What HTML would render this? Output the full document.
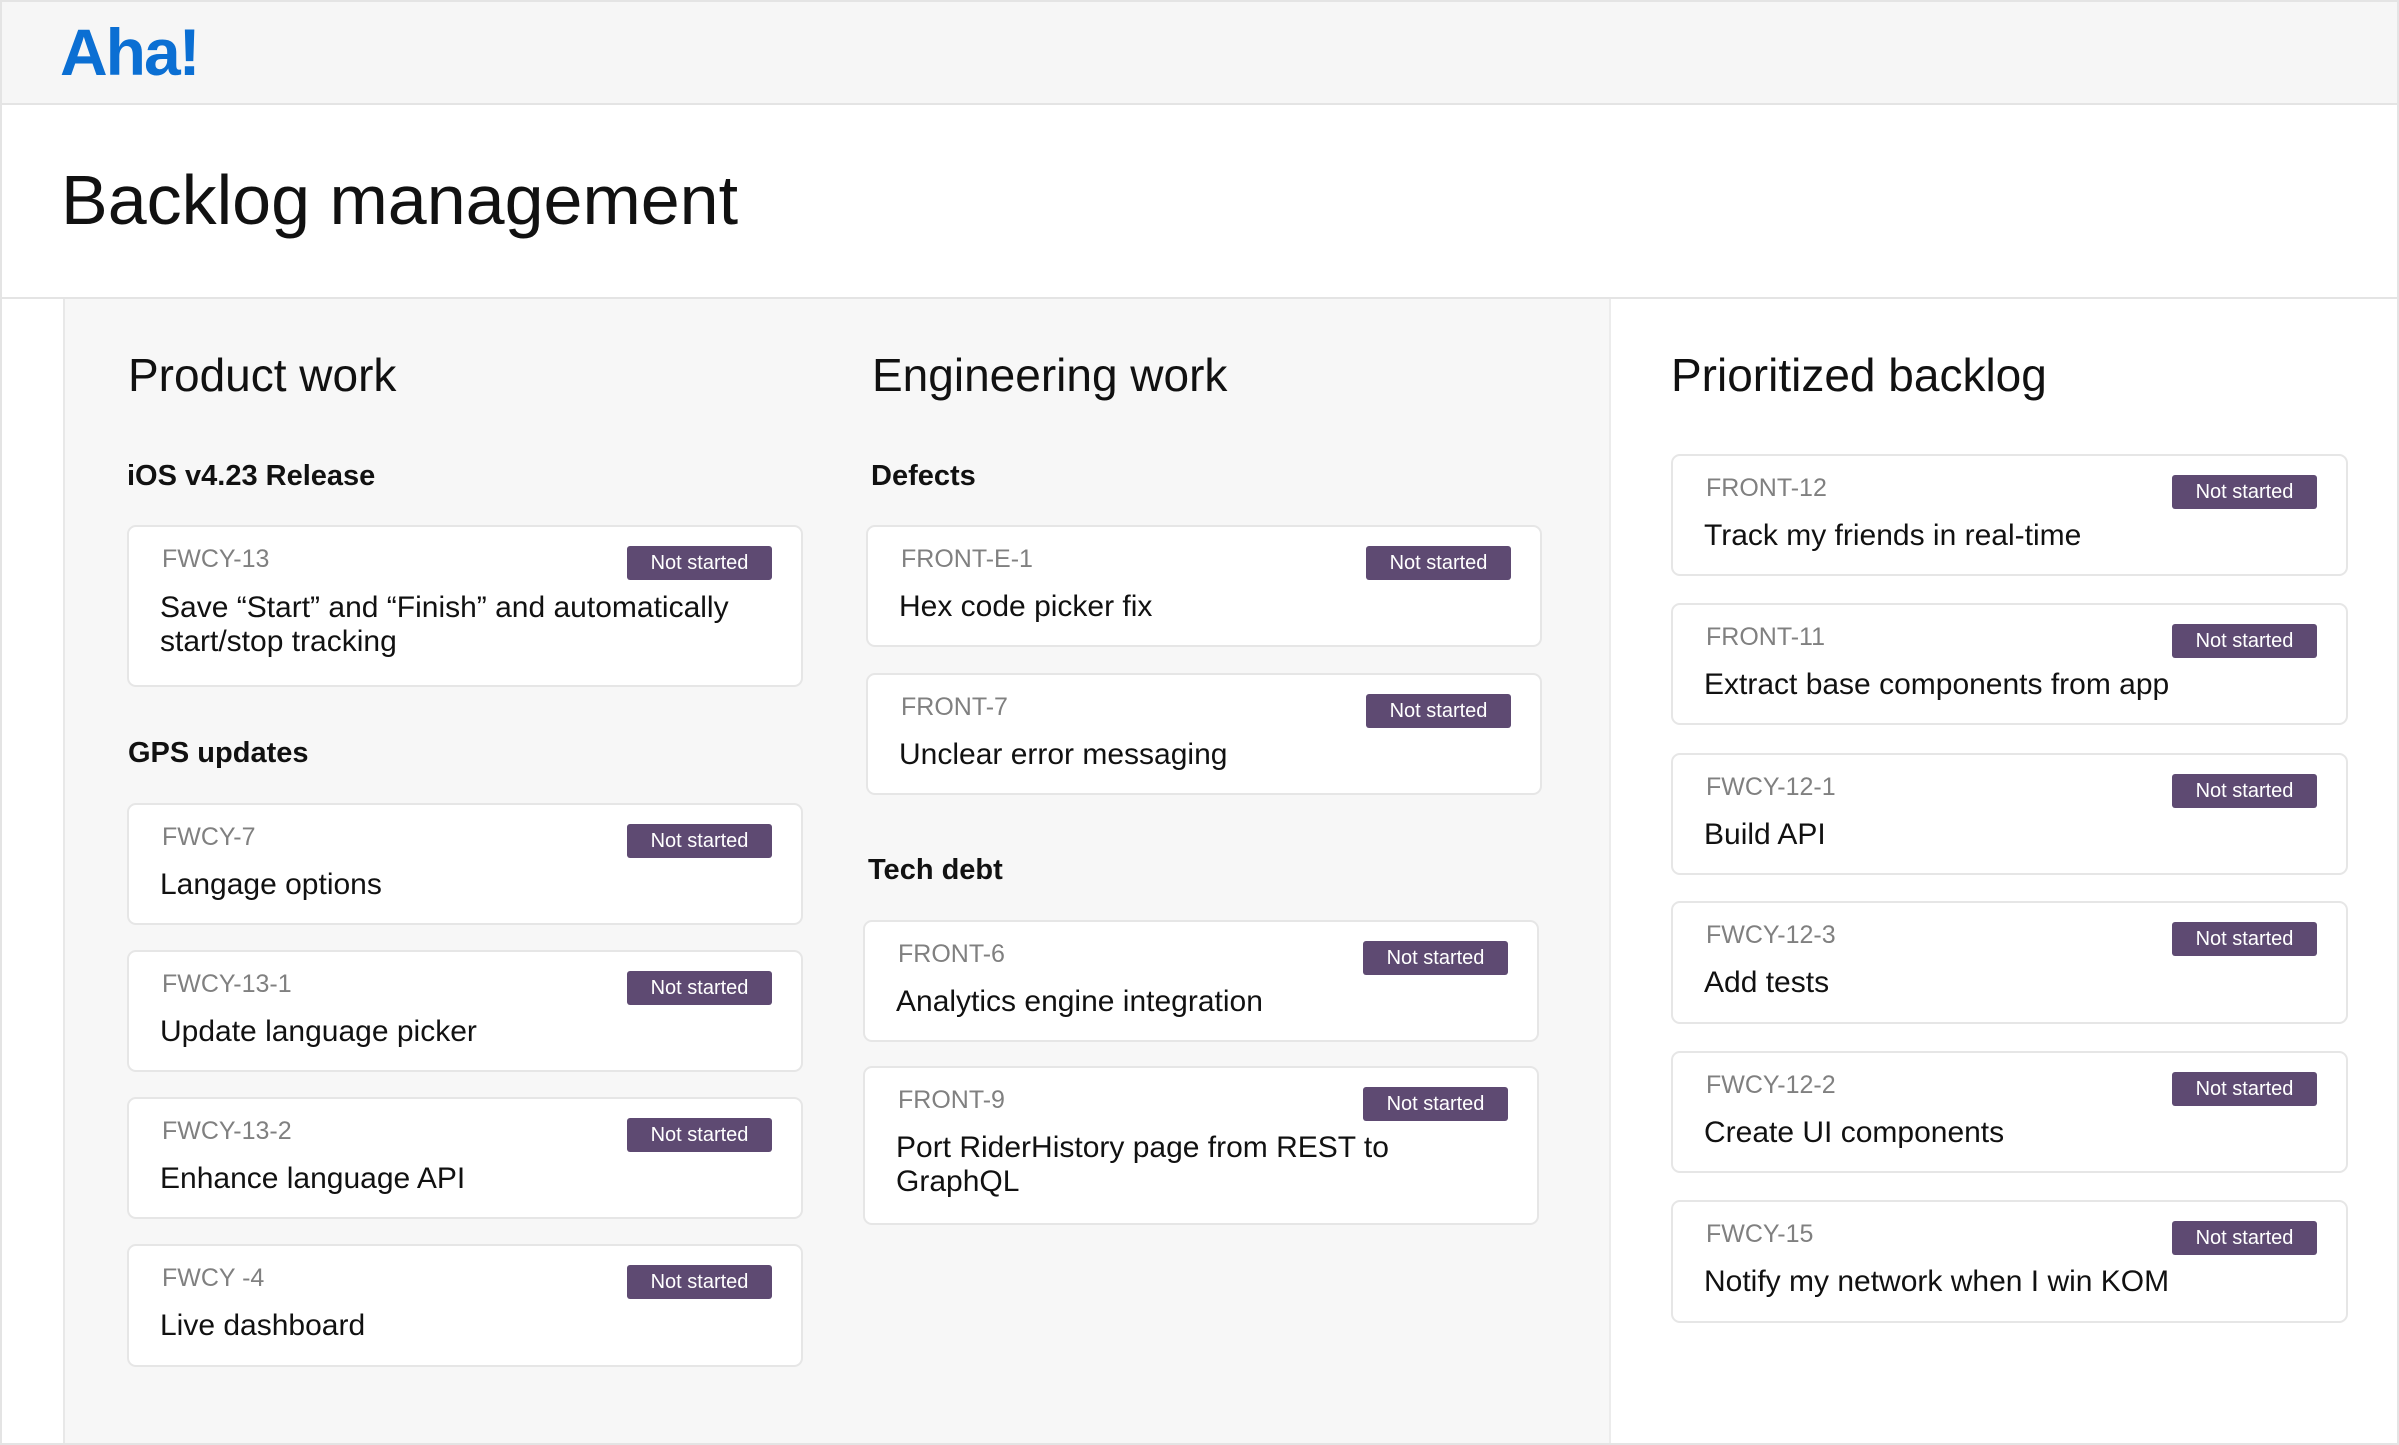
<!DOCTYPE html>
<html><head><meta charset="utf-8"><style>
*{margin:0;padding:0;box-sizing:border-box}
body{width:2399px;height:1445px;position:relative;overflow:hidden;background:#fff;font-family:"Liberation Sans",sans-serif;color:#111}
.frame{position:absolute;left:0;top:0;width:2399px;height:1445px;border:2px solid #e4e4e4}
.hdr{position:absolute;left:0;top:0;width:2399px;height:105px;background:#f6f6f6;border-bottom:2px solid #e4e4e4}
.logo{position:absolute;left:60px;top:16px;font-size:66px;line-height:72px;font-weight:bold;color:#0b6fd3;letter-spacing:-2px}
.title{position:absolute;left:61px;top:160px;font-size:70px;line-height:80px;color:#111}
.div{position:absolute;left:0;top:297px;width:2399px;height:2px;background:#e4e4e4}
.gray{position:absolute;left:63px;top:299px;width:1548px;height:1146px;background:#f7f7f7;border-left:2px solid #e8e8e8;border-right:2px solid #ececec}
.h2{position:absolute;font-size:46px;line-height:52px;color:#111}
.h3{position:absolute;font-size:29px;font-weight:bold;line-height:34px;color:#111}
.card{position:absolute;background:#fff;border:2px solid #e6e6e6;border-radius:9px}
.id{position:absolute;left:33px;top:16px;font-size:25px;line-height:32px;color:#808080}
.b{position:absolute;right:29px;top:19px;width:145px;height:34px;background:#5e4a72;border-radius:3px;color:#fff;font-size:20px;line-height:34px;text-align:center}
.t{position:absolute;left:31px;top:63px;right:10px;font-size:30px;line-height:34px;color:#111}
</style></head><body>
<div class="hdr"><div class="logo">Aha!</div></div>
<div class="title">Backlog management</div>
<div class="div"></div>
<div class="gray"></div>

<div class="h2" style="left:128px;top:349px">Product work</div>
<div class="h3" style="left:127px;top:459px">iOS v4.23 Release</div>
<div class="card" style="left:127px;top:525px;width:676px;height:162px"><div class="id">FWCY-13</div><div class="b">Not started</div><div class="t" style="top:64px">Save “Start” and “Finish” and automatically<br>start/stop tracking</div></div>
<div class="h3" style="left:128px;top:736px">GPS updates</div>
<div class="card" style="left:127px;top:803px;width:676px;height:122px"><div class="id">FWCY-7</div><div class="b">Not started</div><div class="t">Langage options</div></div>
<div class="card" style="left:127px;top:950px;width:676px;height:122px"><div class="id">FWCY-13-1</div><div class="b">Not started</div><div class="t">Update language picker</div></div>
<div class="card" style="left:127px;top:1097px;width:676px;height:122px"><div class="id">FWCY-13-2</div><div class="b">Not started</div><div class="t">Enhance language API</div></div>
<div class="card" style="left:127px;top:1244px;width:676px;height:123px"><div class="id">FWCY -4</div><div class="b">Not started</div><div class="t">Live dashboard</div></div>

<div class="h2" style="left:872px;top:349px">Engineering work</div>
<div class="h3" style="left:871px;top:459px">Defects</div>
<div class="card" style="left:866px;top:525px;width:676px;height:122px"><div class="id">FRONT-E-1</div><div class="b">Not started</div><div class="t">Hex code picker fix</div></div>
<div class="card" style="left:866px;top:673px;width:676px;height:122px"><div class="id">FRONT-7</div><div class="b">Not started</div><div class="t">Unclear error messaging</div></div>
<div class="h3" style="left:868px;top:853px">Tech debt</div>
<div class="card" style="left:863px;top:920px;width:676px;height:122px"><div class="id">FRONT-6</div><div class="b">Not started</div><div class="t">Analytics engine integration</div></div>
<div class="card" style="left:863px;top:1066px;width:676px;height:159px"><div class="id">FRONT-9</div><div class="b">Not started</div><div class="t" style="top:63px">Port RiderHistory page from REST to<br>GraphQL</div></div>

<div class="h2" style="left:1671px;top:349px">Prioritized backlog</div>
<div class="card" style="left:1671px;top:454px;width:677px;height:122px"><div class="id">FRONT-12</div><div class="b">Not started</div><div class="t">Track my friends in real-time</div></div>
<div class="card" style="left:1671px;top:603px;width:677px;height:122px"><div class="id">FRONT-11</div><div class="b">Not started</div><div class="t">Extract base components from app</div></div>
<div class="card" style="left:1671px;top:753px;width:677px;height:122px"><div class="id">FWCY-12-1</div><div class="b">Not started</div><div class="t">Build API</div></div>
<div class="card" style="left:1671px;top:901px;width:677px;height:123px"><div class="id">FWCY-12-3</div><div class="b">Not started</div><div class="t">Add tests</div></div>
<div class="card" style="left:1671px;top:1051px;width:677px;height:122px"><div class="id">FWCY-12-2</div><div class="b">Not started</div><div class="t">Create UI components</div></div>
<div class="card" style="left:1671px;top:1200px;width:677px;height:123px"><div class="id">FWCY-15</div><div class="b">Not started</div><div class="t">Notify my network when I win KOM</div></div>
<div class="frame"></div>
</body></html>
